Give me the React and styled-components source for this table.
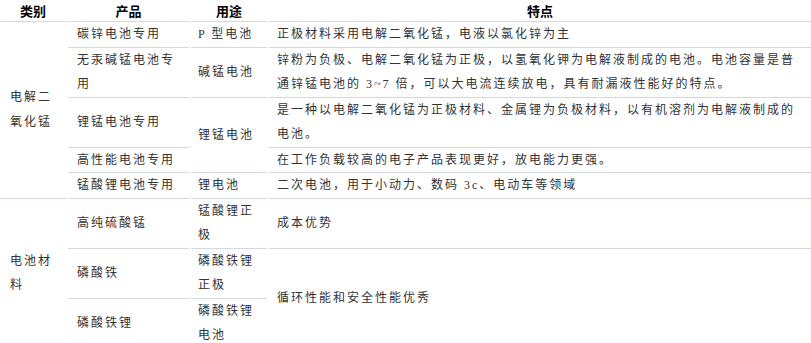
import React from "react";
import styled, { createGlobalStyle } from "styled-components";

const GlobalStyle = createGlobalStyle`
	html, body {
		margin: 0;
		padding: 0;
		background: #fff;
		overflow: hidden;
	}
`;

const columns = [66, 121, 76, 542];

// left / right padding per column
const pads = {
	kind: "0 8px 0 10px",
	product: "0 9px 0 9px",
	use: "0 5px 0 7px",
	note: "0 8px 0 8px",
};

const rows = [
	{
		kind: { text: "电解二氧化锰", span: 5 },
		product: "碳锌电池专用",
		use: { text: "P 型电池" },
		note: { text: "正极材料采用电解二氧化锰，电液以氯化锌为主" },
	},
	{
		product: "无汞碱锰电池专\n用",
		use: { text: "碱锰电池" },
		note: {
			text: "锌粉为负极、电解二氧化锰为正极，以氢氧化钾为电解液制成的电池。电池容量是普通锌锰电池的 3~7 倍，可以大电流连续放电，具有耐漏液性能好的特点。",
		},
	},
	{
		product: "锂锰电池专用",
		use: { text: "锂锰电池", span: 2 },
		note: {
			text: "是一种以电解二氧化锰为正极材料、金属锂为负极材料，以有机溶剂为电解液制成的\n电池。",
		},
	},
	{
		product: "高性能电池专用",
		note: { text: "在工作负载较高的电子产品表现更好，放电能力更强。" },
	},
	{
		product: "锰酸锂电池专用",
		use: { text: "锂电池" },
		note: { text: "二次电池，用于小动力、数码 3c、电动车等领域" },
	},
	{
		kind: { text: "电池材料", span: 3 },
		product: "高纯硫酸锰",
		use: { text: "锰酸锂正极" },
		note: { text: "成本优势" },
	},
	{
		product: "磷酸铁",
		use: { text: "磷酸铁锂正极" },
		note: { text: "循环性能和安全性能优秀", span: 2 },
	},
	{
		product: "磷酸铁锂",
		use: { text: "磷酸铁锂电池" },
	},
];

export default function App() {
	return (
		<>
			<GlobalStyle />
			<Table>
				<colgroup>
					{columns.map((w, i) => (
						<col key={i} style={{ width: w }} />
					))}
				</colgroup>
				<thead>
					<tr>
						<HeadCell>类别</HeadCell>
						<HeadCell>产品</HeadCell>
						<HeadCell>用途</HeadCell>
						<HeadCell>特点</HeadCell>
					</tr>
				</thead>
				<tbody>
					{rows.map((row, i) => (
						<tr key={i}>
							{row.kind && (
								<Cell $col="kind" rowSpan={row.kind.span}>
									{row.kind.text}
								</Cell>
							)}
							<Cell $col="product">{row.product}</Cell>
							{row.use && (
								<Cell $col="use" rowSpan={row.use.span}>
									{row.use.text}
								</Cell>
							)}
							{row.note && (
								<Cell $col="note" rowSpan={row.note.span}>
									{row.note.text}
								</Cell>
							)}
						</tr>
					))}
				</tbody>
			</Table>
		</>
	);
}

const Table = styled.table`
	table-layout: fixed;
	width: 815px;
	margin-left: -2px;
	border-collapse: separate;
	border-spacing: 2px 0;
`;

const HeadCell = styled.th`
	padding: 0;
	height: 21px;
	line-height: 21px;
	text-align: center;
	vertical-align: middle;
	font-family: "Noto Sans CJK SC", sans-serif;
	font-size: 13px;
	font-weight: 700;
	color: #000;
	border-bottom: 1px solid #d3d9e2;
`;

/* source line breaks are kept with pre-line */
const Cell = styled.td`
	padding: ${(p) => pads[p.$col]};
	vertical-align: middle;
	text-align: left;
	font-family: "Liberation Serif", "Noto Sans CJK SC", serif;
	font-size: 12px;
	line-height: 24.5px;
	letter-spacing: 2px;
	color: #333;
	border-bottom: 1px solid #d3d9e2;
	white-space: pre-line;
	word-break: break-all;
`;
